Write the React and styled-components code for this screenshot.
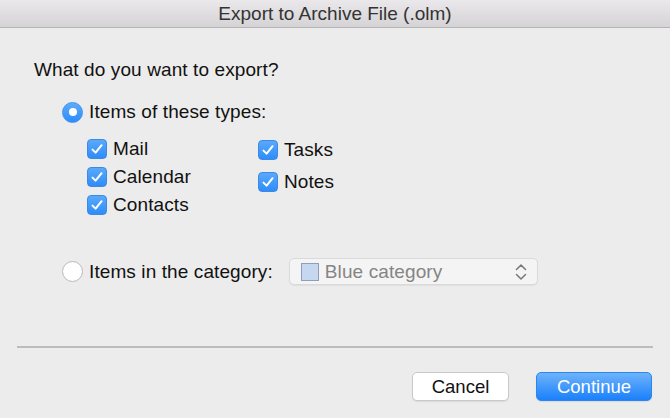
import React, { useState } from 'react';
import styled, { createGlobalStyle } from 'styled-components';

const GlobalStyle = createGlobalStyle`
  html, body {
    margin: 0;
    padding: 0;
    background: #ececec;
  }
  body {
    font-family: "Liberation Sans", Arial, Helvetica, sans-serif;
    -webkit-font-smoothing: antialiased;
  }
`;

const Window = styled.div`
  width: 670px;
  height: 418px;
  display: flex;
  flex-direction: column;
  background: #ececec;
  overflow: hidden;
`;

const TitleBar = styled.div`
  height: 27px;
  flex-shrink: 0;
  display: flex;
  align-items: center;
  justify-content: center;
  background: linear-gradient(to bottom, #eae8ea, #d5d3d5);
  border-bottom: 1px solid #b3b3b3;
  font-size: 19px;
  color: #333;
`;

const Body = styled.div`
  flex: 1;
  display: flex;
  flex-direction: column;
  padding: 31px 0 0 34px;
  color: #111;
  font-size: 19px;
  letter-spacing: 0.1px;
`;

const Question = styled.div`
  line-height: 22px;
`;

const Options = styled.div`
  display: flex;
  flex-direction: column;
  padding-left: 28px;
  margin-top: 20px;
`;

const RadioRow = styled.label`
  display: flex;
  align-items: center;
  gap: 6px;
  height: ${(p) => p.$height || 22}px;
  margin-top: ${(p) => p.$top || 0}px;
  cursor: default;
`;

const RadioDot = styled.span`
  width: 21px;
  height: 21px;
  border-radius: 50%;
  box-sizing: border-box;
  display: flex;
  align-items: center;
  justify-content: center;
  flex-shrink: 0;
  background: ${(p) => (p.$on ? 'linear-gradient(to bottom, #5eabfb, #2c8cfb)' : '#fff')};
  border: 1px solid ${(p) => (p.$on ? '#3f92f0' : '#b9b9b9')};
  &::after {
    content: '';
    display: ${(p) => (p.$on ? 'block' : 'none')};
    width: 8px;
    height: 8px;
    border-radius: 50%;
    background: #fff;
  }
`;

const TypeGrid = styled.div`
  display: flex;
  margin-top: 15px;
  padding-left: 25px;
`;

const TypeColumn = styled.div`
  display: flex;
  flex-direction: column;
  gap: ${(p) => p.$gap}px;
  width: ${(p) => p.$width || 'auto'};
  margin-top: ${(p) => p.$top || 0}px;
`;

const CheckRow = styled.label`
  display: flex;
  align-items: center;
  gap: 6px;
  height: 22px;
`;

const CheckBox = styled.span`
  width: 20px;
  height: 20px;
  box-sizing: border-box;
  border-radius: 4px;
  background: linear-gradient(to bottom, #5aa9fb, #2f8cf8);
  border: 1px solid #3a8ae6;
  display: flex;
  align-items: center;
  justify-content: center;
  flex-shrink: 0;
`;

const Select = styled.div`
  width: 249px;
  height: 27px;
  box-sizing: border-box;
  margin-left: 10px;
  display: flex;
  align-items: center;
  padding: 0 10px 0 11px;
  gap: 6px;
  background: #f4f4f4;
  border: 1px solid #dadada;
  border-radius: 5px;
  box-shadow: 0 1px 1px rgba(0, 0, 0, 0.06);
  color: #858585;
`;

const Swatch = styled.span`
  width: 18px;
  height: 18px;
  box-sizing: border-box;
  background: #c6d7f0;
  border: 1px solid #8e9fbd;
  flex-shrink: 0;
`;

const SelectText = styled.span`
  flex: 1;
`;

const Footer = styled.div`
  display: flex;
  flex-direction: column;
  padding: 0 17px 17px 17px;
`;

const Separator = styled.div`
  height: 2px;
  background: #bcbcbc;
`;

const ButtonRow = styled.div`
  display: flex;
  justify-content: flex-end;
  gap: 27px;
  margin-top: 24px;
  padding-right: 1px;
`;

const Button = styled.button`
  height: 29px;
  width: ${(p) => p.$width}px;
  box-sizing: border-box;
  border-radius: 5px;
  font-family: "Liberation Sans", Arial, sans-serif;
  font-size: 18.5px;
  padding: 0;
  cursor: default;
  color: ${(p) => (p.$primary ? '#fff' : '#111')};
  background: ${(p) => (p.$primary ? 'linear-gradient(to bottom, #6db3fb, #1b80fb)' : '#fff')};
  border: 1px solid ${(p) => (p.$primary ? '#2a86f0' : '#c9c9c9')};
  box-shadow: 0 1px 1px rgba(0, 0, 0, 0.08);
`;

const Check = () => (
  <svg width="14" height="14" viewBox="0 0 14 14">
    <path d="M2.5 7.6 L5.6 10.6 L11.6 3.2" fill="none" stroke="#fff" strokeWidth="2" strokeLinecap="round" strokeLinejoin="round" />
  </svg>
);

const Chevrons = () => (
  <svg width="12" height="18" viewBox="0 0 12 18">
    <path d="M1.5 6.5 L6 2 L10.5 6.5" fill="none" stroke="#777" strokeWidth="1.5" strokeLinecap="round" strokeLinejoin="round" />
    <path d="M1.5 11.5 L6 16 L10.5 11.5" fill="none" stroke="#777" strokeWidth="1.5" strokeLinecap="round" strokeLinejoin="round" />
  </svg>
);

const Item = ({ label }) => (
  <CheckRow>
    <CheckBox>
      <Check />
    </CheckBox>
    {label}
  </CheckRow>
);

export default function App() {
  const [mode] = useState('types');

  return (
    <>
      <GlobalStyle />
      <Window>
        <TitleBar>Export to Archive File (.olm)</TitleBar>
        <Body>
          <Question>What do you want to export?</Question>
          <Options>
            <RadioRow>
              <RadioDot $on={mode === 'types'} />
              Items of these types:
            </RadioRow>
            <TypeGrid>
              <TypeColumn $gap={6} $width="171px">
                <Item label="Mail" />
                <Item label="Calendar" />
                <Item label="Contacts" />
              </TypeColumn>
              <TypeColumn $gap={10} $top={1}>
                <Item label="Tasks" />
                <Item label="Notes" />
              </TypeColumn>
            </TypeGrid>
            <RadioRow $height={27} $top={42}>
              <RadioDot $on={mode === 'category'} />
              Items in the category:
              <Select>
                <Swatch />
                <SelectText>Blue category</SelectText>
                <Chevrons />
              </Select>
            </RadioRow>
          </Options>
        </Body>
        <Footer>
          <Separator />
          <ButtonRow>
            <Button $width={97}>Cancel</Button>
            <Button $width={116} $primary>Continue</Button>
          </ButtonRow>
        </Footer>
      </Window>
    </>
  );
}
